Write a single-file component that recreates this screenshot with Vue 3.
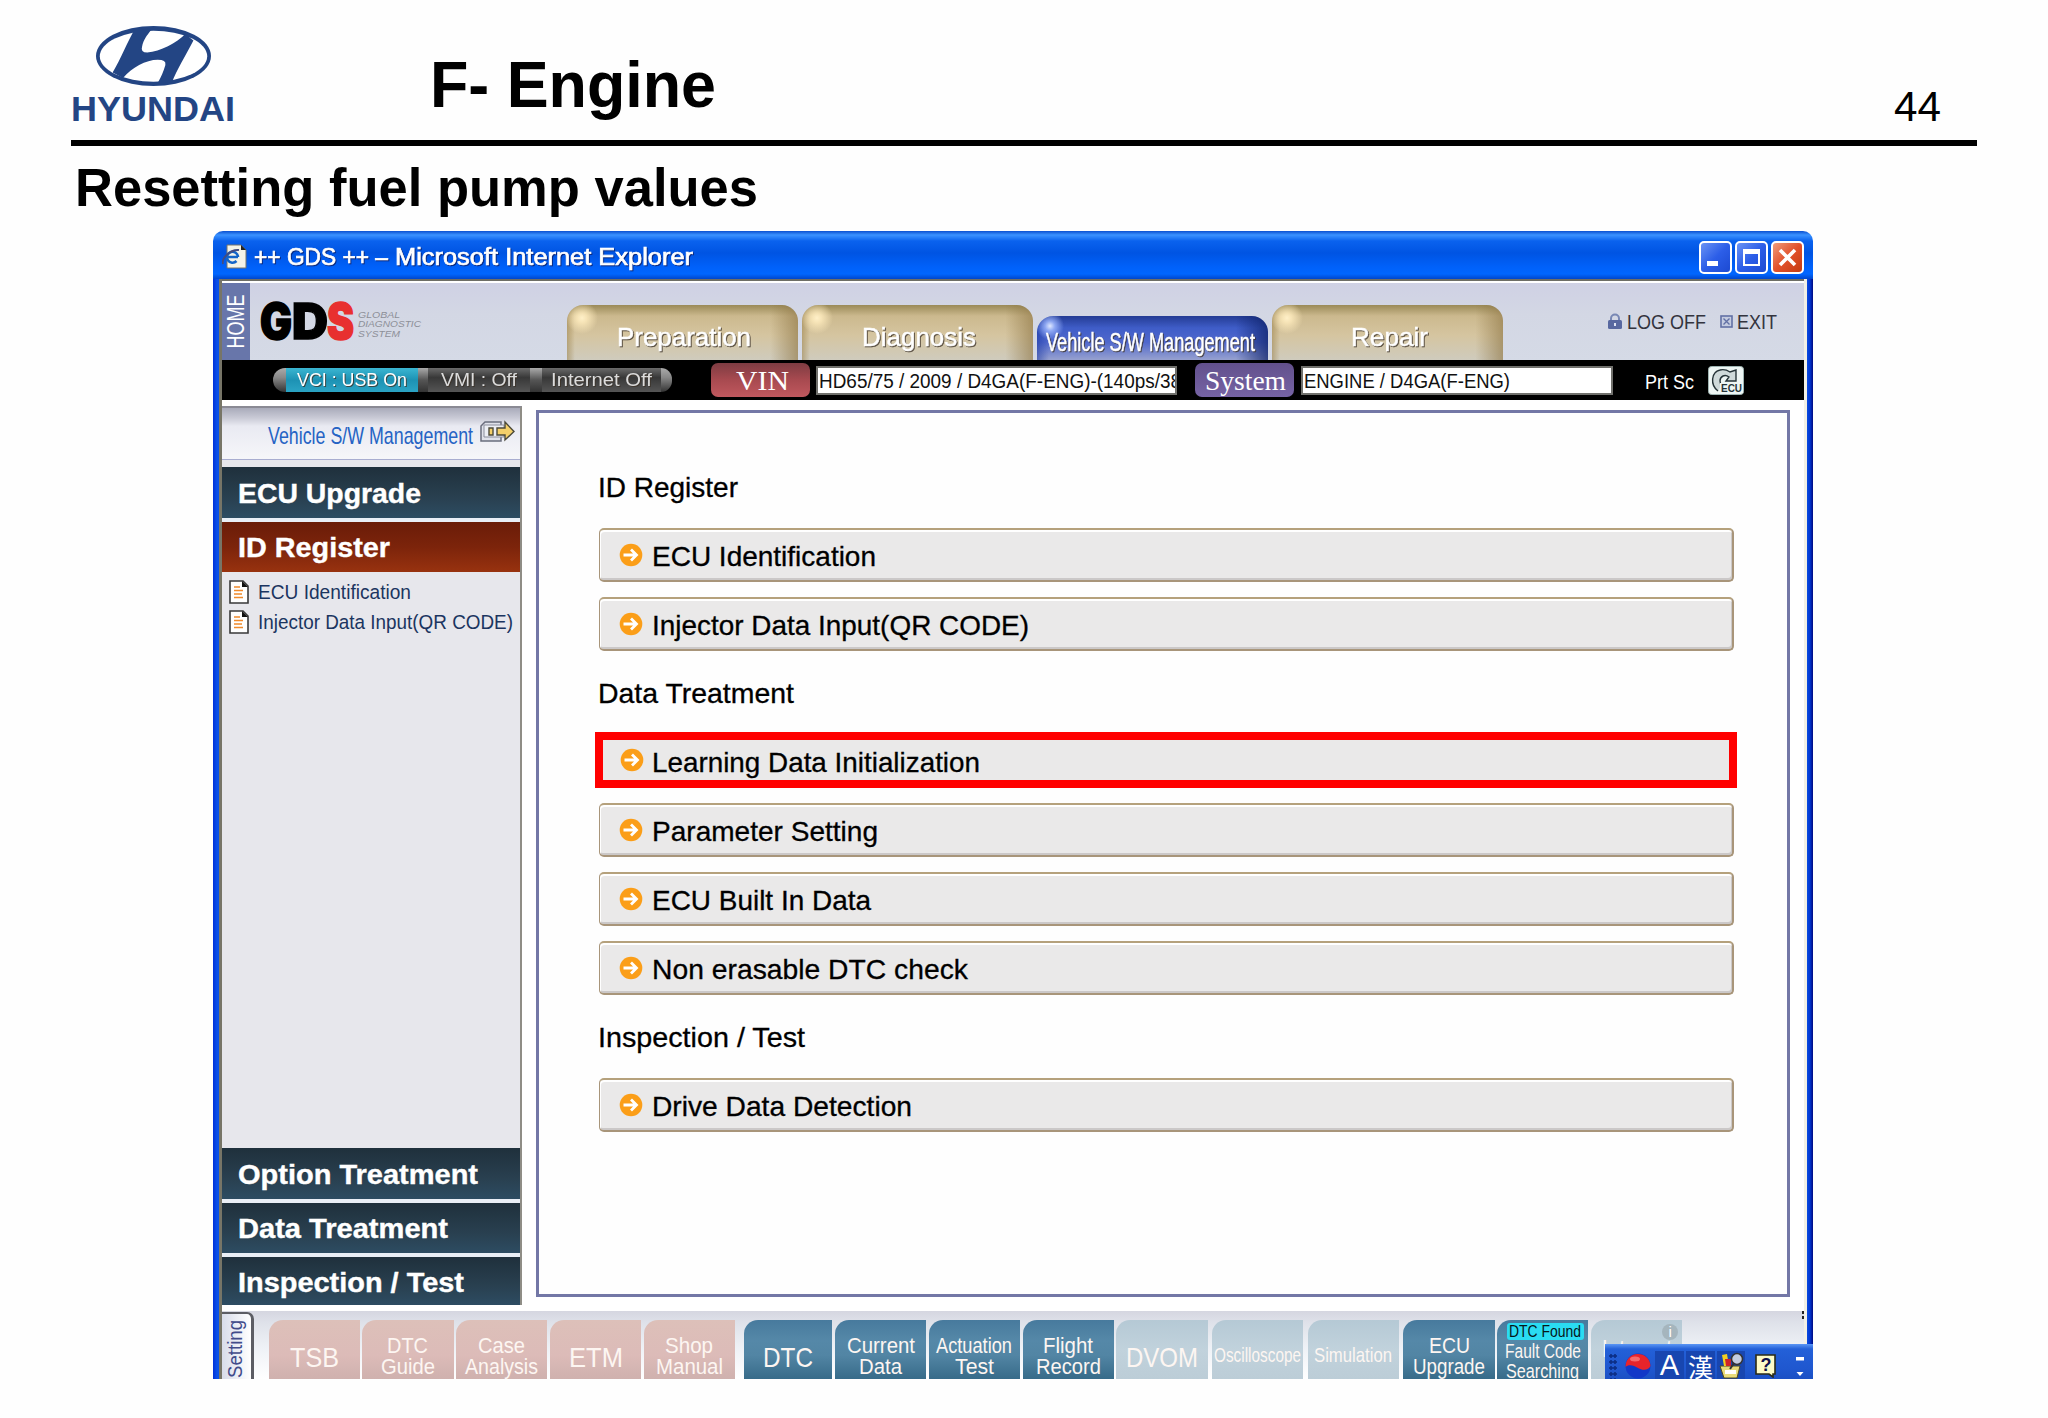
<template>
  <div class="slide">
    <header class="slide-head">
      <div class="brand">
        <svg class="emblem" viewBox="120 79 242 179" preserveAspectRatio="none">
          <ellipse cx="241" cy="168.500" rx="121" ry="89.500" fill="#234584" />
          <ellipse cx="241" cy="169" rx="113" ry="76" fill="#fff" />
          <path
            d="M203,86 C186,125 173,176 155,218 L177,234 C195,204 225,180 250,180 Q268,180 266,195 C262,215 257,230 250,248 L280,246 C290,210 309,166 325,122 L308,103 C290,130 255,155 228,158 Q213,158 217,140 C220,120 227,107 236,91 Z"
            fill="#234584"
          />
        </svg>
        <FitText class="wordmark" text="HYUNDAI" :w="164" :size="35" />
      </div>
      <FitText class="slide-title" text="F- Engine" :w="286" :size="64" />
      <FitText class="page-no" text="44" :w="47" :size="42" />
    </header>
    <FitText class="subtitle" text="Resetting fuel pump values" :w="683" :size="53.3" />

    <div class="window">
      <div class="titlebar">
        <svg class="ie-icon" viewBox="0 0 25 25">
          <path d="M5 1H19L24 6V24H5Z" fill="#f4f3e8" stroke="#77756a" />
          <path d="M19 1V6H24" fill="#222" />
          <path d="M16 13A5.500 5.500 0 1 0 14.500 17M6 13H16" fill="none" stroke="#1465c8" stroke-width="2.600" />
          <path d="M1 20C-1 15 8 5 17 6" fill="none" stroke="#444c80" stroke-width="2" />
        </svg>
        <FitText text="++ GDS ++ –" :w="134" :size="23" />
        <FitText class="title-name" text="Microsoft Internet Explorer" :w="298" :size="23" />
        <div class="win-btns">
          <svg v-for="b in ['min', 'max', 'close']" :key="b" viewBox="0 0 33 33">
            <defs>
              <linearGradient :id="'wb-' + b" x1="0" y1="0" x2="1" y2="1">
                <stop offset="0" :stop-color="b === 'close' ? '#f0a080' : '#6f97f5'" />
                <stop offset="0.500" :stop-color="b === 'close' ? '#e2512b' : '#2c5ee8'" />
                <stop offset="1" :stop-color="b === 'close' ? '#c23a10' : '#1b48d0'" />
              </linearGradient>
            </defs>
            <rect x="1" y="1" width="31" height="31" rx="4" :fill="`url(#wb-${b})`" stroke="#fff" stroke-width="2" />
            <rect v-if="b === 'min'" x="8" y="20" width="11" height="5" fill="#fff" />
            <path v-else-if="b === 'max'" d="M8 8H25V25H8ZM10 13V23H23V13Z" fill="#fff" fill-rule="evenodd" />
            <path v-else d="M9 9L24 24M24 9L9 24" stroke="#fff" stroke-width="3.600" />
          </svg>
        </div>
      </div>

      <div class="frame">
        <div class="client">
          <div class="top">
            <div class="home">
              <svg width="28" height="77"><text transform="translate(22 65.500) rotate(-90)" textLength="54" lengthAdjust="spacingAndGlyphs">HOME</text></svg>
            </div>
            <svg class="gds" width="94" height="46">
              <text x="0" y="41" textLength="32" lengthAdjust="spacingAndGlyphs">G</text>
              <text x="32" y="41" textLength="36" lengthAdjust="spacingAndGlyphs">D</text>
              <text x="67" y="41" textLength="27" lengthAdjust="spacingAndGlyphs" class="red">S</text>
            </svg>
            <div class="gds-sub">
              <FitText text="GLOBAL" :w="42" :size="9.5" />
              <FitText text="DIAGNOSTIC" :w="63" :size="9.5" />
              <FitText text="SYSTEM" :w="42" :size="9.5" />
            </div>
            <nav class="tabs">
              <div v-for="t in tabs" :key="t.text" class="tab" :class="{ active: t.active }">
                <FitText :text="t.text" :w="t.w" :size="25" />
              </div>
            </nav>
            <div class="session">
              <svg width="16" height="17" viewBox="0 0 16 17">
                <path d="M4 8V5.500A4 4 0 0 1 12 5.500V8" fill="none" stroke="#7887b4" stroke-width="2" />
                <rect x="1" y="7" width="14" height="9" rx="1.500" fill="#5868a0" />
                <rect x="7" y="10" width="2" height="3" fill="#dfe3f2" />
              </svg>
              <FitText text="LOG OFF" :w="79" :size="20" />
              <svg class="exit-icon" width="13" height="13" viewBox="0 0 13 13">
                <rect x="1" y="1" width="11" height="11" fill="#c5cce0" stroke="#6271a5" stroke-width="1.600" />
                <path d="M3.500 3.500L9.500 9.500M9.500 3.500L3.500 9.500" stroke="#6271a5" stroke-width="1.400" />
              </svg>
              <FitText text="EXIT" :w="40" :size="20" />
            </div>
          </div>

          <div class="status">
            <div class="pills">
              <i class="cap left"></i>
              <span class="pill on"><FitText text="VCI : USB On" :w="110" :size="18" /></span>
              <i class="joint"></i>
              <span class="pill vmi"><FitText text="VMI : Off" :w="76" :size="18" /></span>
              <i class="joint wide"></i>
              <span class="pill net"><FitText text="Internet Off" :w="101" :size="18" /></span>
              <i class="cap right"></i>
            </div>
            <div class="badge vin"><FitText text="VIN" :w="53" :size="27" /></div>
            <div class="field f1"><FitText text="HD65/75 / 2009 / D4GA(F-ENG)-(140ps/38" :w="362" :size="20" /></div>
            <div class="badge sys"><FitText text="System" :w="81" :size="27" /></div>
            <div class="field f2"><FitText text="ENGINE / D4GA(F-ENG)" :w="206" :size="20" /></div>
            <FitText class="prt" text="Prt Sc" :w="49" :size="20" />
            <svg class="ecu-icon" width="36" height="29" viewBox="0 0 36 29">
              <rect x="0.500" y="0.500" width="35" height="28" rx="3" fill="#eef6f4" stroke="#9fb4b2" />
              <path d="M10 25C2 19 3 6 12 4C16 3 19 4 22 6L28 4V15H18L21 11C17 8 12 10 12 15L13 20" fill="#cfdada" stroke="#253337" stroke-width="1.400" />
              <rect x="12" y="17" width="23" height="10" fill="#eef6f4" />
              <text x="13" y="26" textLength="21" lengthAdjust="spacingAndGlyphs">ECU</text>
            </svg>
          </div>

          <div class="main">
            <aside class="side">
              <div class="side-head">
                <FitText text="Vehicle S/W Management" :w="205" :size="24" />
                <svg width="35" height="23" viewBox="0 0 35 23">
                  <path d="M1 6L5 2H21V21H1Z" fill="#dfe1ea" stroke="#6a6d7d" stroke-width="1.500" />
                  <path d="M4 5H24V17H4Z" fill="#eceef4" stroke="#8a8d9c" />
                  <path d="M9 8H13V15H9ZM17 8H25V2L34 11.500L25 20V15H17Z" fill="#f4d06a" stroke="#4c4a3a" stroke-width="1.400" />
                </svg>
              </div>
              <div class="side-item first"><FitText text="ECU Upgrade" :w="183" :size="28.5" /></div>
              <div class="side-item current"><FitText text="ID Register" :w="152" :size="28.5" /></div>
              <div class="side-sub">
                <div v-for="s in subItems" :key="s.text" class="sub-row">
                  <svg width="20" height="24" viewBox="0 0 20 24">
                    <path d="M1 1H14L19 6V23H1Z" fill="#fff" stroke="#3a3a3a" stroke-width="1.600" />
                    <path d="M13 1V7H19Z" fill="#111" />
                    <path d="M5 7H11M5 10.500H14M5 14H13M5 17.500H14" stroke="#f08a2c" stroke-width="1.500" />
                  </svg>
                  <FitText :text="s.text" :w="s.w" :size="20.5" />
                </div>
              </div>
              <div class="side-item"><FitText text="Option Treatment" :w="240" :size="28.5" /></div>
              <div class="side-item"><FitText text="Data Treatment" :w="210" :size="28.5" /></div>
              <div class="side-item last"><FitText text="Inspection / Test" :w="226" :size="28.5" /></div>
            </aside>

            <section class="panel">
              <template v-for="r in rows" :key="r.text + r.kind">
                <div v-if="r.kind === 'head'" class="row head">
                  <FitText :text="r.text" :w="r.w" :size="28" />
                </div>
                <div v-else class="row">
                  <div class="btn" :class="{ marked: r.marked }">
                    <svg width="24" height="24" viewBox="0 0 24 24">
                      <circle cx="12" cy="12" r="11.300" fill="#fb9e18" />
                      <path d="M4.500 12H17M12 6.500L17.500 12L12 17.500" fill="none" stroke="#fff" stroke-width="2.800" />
                    </svg>
                    <FitText :text="r.text" :w="r.w" :size="28" />
                  </div>
                </div>
              </template>
            </section>
          </div>

          <footer class="toolbar">
            <div class="setting">
              <svg width="29" height="65"><text transform="translate(20 64) rotate(-90)" textLength="58" lengthAdjust="spacingAndGlyphs">Setting</text></svg>
            </div>
            <div v-for="(t, i) in tools" :key="i" class="tool" :class="[t.tone, t.cls, { two: t.lines.length > 1 }]">
              <span v-if="t.flag" class="flag"><FitText :text="t.flag" :w="72" :size="16" /></span>
              <FitText v-for="l in t.lines" :key="l[0]" :text="l[0]" :w="l[1]" :size="t.size" />
              <span v-if="t.info" class="info">i</span>
            </div>
          </footer>
        </div>
      </div>

      <!-- input-method bar floating over the window corner -->
      <div class="ime">
        <i class="grip"></i>
        <svg width="26" height="26" viewBox="0 0 26 26">
          <circle cx="13" cy="13" r="12.500" fill="#1238c8" />
          <path d="M0.500 14A12.500 12.500 0 0 1 25.500 13C24 17 18 18 13 15C9 12 3 11 0.500 14Z" fill="#e8242b" />
          <ellipse cx="10" cy="6" rx="5" ry="2.500" fill="#ff9a96" opacity="0.600" />
        </svg>
        <span class="ime-key latin">A</span>
        <span class="ime-key han">漢</span>
        <span class="ime-key pad">
          <svg width="26" height="28" viewBox="0 0 26 28">
            <path d="M2 14H22L19 26H6Z" fill="#e8dc7a" stroke="#4d4820" />
            <path d="M6 14L4 3L9 2L11 14Z" fill="#f2d020" />
            <path d="M8 14L7 7H13V14Z" fill="#d0242a" />
            <circle cx="19" cy="7" r="5.500" fill="#c3ccdf" stroke="#333" stroke-width="1.500" />
            <path d="M16 11L12 17" stroke="#333" stroke-width="2" />
            <path d="M7 20H18" stroke="#fff" stroke-width="4" />
          </svg>
        </span>
        <svg class="help" width="23" height="24" viewBox="0 0 23 24">
          <path d="M1 1H20V20H18V23L14 20H1Z" fill="#fdfbc8" stroke="#2b2b16" stroke-width="1.600" />
          <text x="5.500" y="17">?</text>
        </svg>
        <svg class="more" width="10" height="24" viewBox="0 0 10 24">
          <rect x="1" y="3" width="8" height="3.500" fill="#fff" />
          <path d="M1.500 18H8.500L5 22Z" fill="#fff" />
        </svg>
      </div>
    </div>
  </div>
</template>

<script setup>
import { h } from 'vue'

// Single line of text stretched or condensed to a given width
const FitText = (props) =>
  h('svg', { width: props.w, height: props.size * 1.2, class: 'fit', overflow: 'visible' }, [
    h(
      'text',
      {
        x: 0,
        y: props.size * 0.95,
        'font-size': props.size,
        fill: 'currentColor',
        textLength: props.w,
        lengthAdjust: 'spacingAndGlyphs'
      },
      props.text
    )
  ])
FitText.props = ['text', 'w', 'size']

const tabs = [
  { text: 'Preparation', w: 134 },
  { text: 'Diagnosis', w: 114 },
  { text: 'Vehicle S/W Management', w: 209, active: true },
  { text: 'Repair', w: 77 }
]

const subItems = [
  { text: 'ECU Identification', w: 153 },
  { text: 'Injector Data Input(QR CODE)', w: 255 }
]

const rows = [
  { kind: 'head', text: 'ID Register', w: 140 },
  { kind: 'btn', text: 'ECU Identification', w: 224 },
  { kind: 'btn', text: 'Injector Data Input(QR CODE)', w: 377 },
  { kind: 'head', text: 'Data Treatment', w: 196 },
  { kind: 'btn', text: 'Learning Data Initialization', w: 328, marked: true },
  { kind: 'btn', text: 'Parameter Setting', w: 226 },
  { kind: 'btn', text: 'ECU Built In Data', w: 219 },
  { kind: 'btn', text: 'Non erasable DTC check', w: 316 },
  { kind: 'head', text: 'Inspection / Test', w: 207 },
  { kind: 'btn', text: 'Drive Data Detection', w: 260 }
]

const tools = [
  { tone: 'pink', size: 28, lines: [['TSB', 49]] },
  { tone: 'pink', size: 22, lines: [['DTC', 41], ['Guide', 54]] },
  { tone: 'pink', size: 22, lines: [['Case', 47], ['Analysis', 73]] },
  { tone: 'pink', size: 28, lines: [['ETM', 54]] },
  { tone: 'pink', size: 22, lines: [['Shop', 48], ['Manual', 67]] },
  { tone: 'blue', cls: 'group', size: 28, lines: [['DTC', 50]] },
  { tone: 'blue', size: 22, lines: [['Current', 68], ['Data', 43]] },
  { tone: 'blue', size: 22, lines: [['Actuation', 76], ['Test', 39]] },
  { tone: 'blue', size: 22, lines: [['Flight', 50], ['Record', 65]] },
  { tone: 'pale', size: 28, lines: [['DVOM', 72]] },
  { tone: 'pale', cls: 'mid', size: 21, lines: [['Oscilloscope', 87]] },
  { tone: 'pale', cls: 'mid', size: 21, lines: [['Simulation', 78]] },
  { tone: 'blue', cls: 'gap', size: 22, lines: [['ECU', 41], ['Upgrade', 72]] },
  { tone: 'blue', cls: 'flagged', size: 20.5, flag: 'DTC Found', lines: [['Fault Code', 76], ['Searching', 73]] },
  { tone: 'pale', cls: 'net-tool', size: 24, info: true, lines: [['Internet', 70]] }
]
</script>

<style>
body {
  background: #fefefe;
}
</style>

<style scoped>
.slide {
  width: 2048px;
  height: 1418px;
  overflow: hidden;
  font-family: "Liberation Sans", Arial, sans-serif;
  color: #000;
  display: flex;
  flex-direction: column;
}

svg {
  display: block;
  flex: none;
}

.slide-head {
  box-sizing: border-box;
  height: 146px;
  margin: 0 71px;
  border-bottom: 6px solid #000;
  display: flex;
}

.brand {
  width: 359px;
  padding-top: 26px;
}

.emblem {
  width: 115px;
  height: 60px;
  margin-left: 25px;
}

.wordmark {
  margin-top: 2px;
  color: #234584;
  font-weight: bold;
}

.slide-title {
  margin-top: 46px;
  font-weight: bold;
}

.page-no {
  margin: 81px 36px 0 auto;
}

.subtitle {
  margin: 9px 0 0 75px;
  height: 76px;
  font-weight: bold;
}

.window {
  position: relative;
  width: 1600px;
  height: 1148px;
  margin-left: 213px;
}

.titlebar {
  box-sizing: border-box;
  height: 48px;
  padding: 2px 9px 0;
  display: flex;
  align-items: center;
  color: #fff;
  border-radius: 10px 10px 0 0;
  background: linear-gradient(#0a50d0 0, #3a92ff 4px, #0a62ee 10px, #0054e3 22px, #0061fa 36px, #0066ff 43px, #0046cc 48px);
}

.titlebar .fit {
  margin-top: 2px;
  filter: drop-shadow(1.5px 1.5px 0 #0a2a80);
  stroke: #fff;
  stroke-width: 0.7px;
}

.ie-icon {
  width: 25px;
  height: 25px;
  margin-right: 7px;
}

.title-name {
  margin-left: 7px;
}

.win-btns {
  margin: 2px 0 0 auto;
  display: flex;
  gap: 3px;
}

.win-btns svg {
  width: 33px;
  height: 33px;
}

.frame {
  height: 1100px;
  padding: 0 9px;
  background:
    linear-gradient(90deg, #0030d8, #0a50e8 4px, #0a50e8 6px, #777567 6px, #777567 9px) left / 9px 100% no-repeat,
    linear-gradient(90deg, #f2f0e6 3px, #0a4be0 3px, #0035d0 6px, #000a80 9px) right / 9px 100% no-repeat;
}

.client {
  box-sizing: border-box;
  height: 100%;
  border-top: 2px solid #6e6e66;
  background: #fff;
}

.top {
  box-sizing: border-box;
  height: 79px;
  border-top: 2px solid #fff;
  display: flex;
  background: linear-gradient(#cfd1e4, #d3d7e4 40%, #d5dae6);
}

.home {
  width: 28px;
  background: #6876aa;
}

.home text {
  font-size: 24px;
  fill: #fff;
}

.gds {
  margin: 15px 0 0 10px;
  font-family: Inter, "Liberation Sans", sans-serif;
  font-size: 49px;
  font-weight: 900;
  stroke: #000;
  stroke-width: 1.5px;
}

.gds .red {
  fill: #e8302f;
  stroke: #e8302f;
}

.gds-sub {
  margin: 26px 0 0 4px;
  width: 209px;
  display: flex;
  flex-direction: column;
  font-style: italic;
  color: #8d8f98;
}

.gds-sub .fit {
  height: 9.4px;
}

.tabs {
  display: flex;
  align-items: flex-end;
  gap: 4.3px;
}

.tab {
  box-sizing: border-box;
  width: 230.800px;
  height: 55px;
  padding: 16.5px 0 0 3px;
  display: flex;
  justify-content: center;
  border-radius: 16px 16px 0 0;
  color: #fff;
  background:
    radial-gradient(circle at 15px 13px, #fff0c8 0, rgba(255, 236, 190, 0.8) 5px, transparent 16px),
    linear-gradient(90deg, rgba(150, 125, 70, 0.5), transparent 8px, transparent 88%, rgba(140, 115, 65, 0.6)),
    linear-gradient(#9a8a58, #ccb98e 11px, #d5c5a0 55%, #cfcbbd);
}

.tab .fit,
.pill .fit {
  filter: drop-shadow(1.5px 1.5px 0.5px rgba(60, 50, 40, 0.8));
}

.tab .fit {
  stroke: #fff;
  stroke-width: 0.5px;
}

.tab.active {
  height: 44px;
  padding: 10.5px 4px 0 0;
  background:
    radial-gradient(circle at 13px 10px, #dfe8ff 0, rgba(160, 185, 255, 0.8) 5px, transparent 14px),
    linear-gradient(90deg, rgba(20, 50, 160, 0.5), transparent 12px, transparent 86%, rgba(10, 30, 100, 0.7)),
    linear-gradient(#243c94, #3f5dc8 12px, #5068cc 60%, #97a1cf);
}

.session {
  margin-left: 104px;
  height: 77px;
  display: flex;
  align-items: center;
  color: #33343e;
}

.session .fit {
  margin-left: 4px;
}

.exit-icon {
  margin-left: 14px;
}

.status {
  height: 40px;
  display: flex;
  align-items: center;
  background: #000;
  color: #fff;
}

.pills {
  margin-left: 51px;
  width: 399px;
  height: 24px;
  display: flex;
}

.pill {
  display: flex;
  justify-content: center;
  align-items: center;
  color: #dcdcdc;
  background: linear-gradient(#6a6a6a, #383838 40%, #555);
}

.pill.on {
  width: 132px;
  color: #fff;
  background: linear-gradient(#3bb6d2, #1d92b4 50%, #2ba4c4);
}

.pill.vmi {
  width: 102px;
}

.pill.net {
  width: 119px;
}

.joint {
  width: 10px;
  background: linear-gradient(#aaa, #555 50%, #333);
}

.joint.wide {
  width: 12px;
}

.cap {
  width: 13px;
  background: linear-gradient(#aaa, #888 40%, #333);
}

.cap.left {
  border-radius: 12px 0 0 12px;
}

.cap.right {
  width: 11px;
  border-radius: 0 12px 12px 0;
}

.badge {
  box-sizing: border-box;
  width: 99px;
  height: 34px;
  border-radius: 7px;
  display: flex;
  align-items: center;
  font-family: "Liberation Serif", "Times New Roman", serif;
}

.vin {
  margin-left: 39px;
  padding-left: 25px;
  background: linear-gradient(#7e3c42, #a84a50 50%, #c0585e);
}

.sys {
  margin-left: 18px;
  padding-left: 10px;
  background: linear-gradient(#62508c, #7663a4);
}

.field {
  box-sizing: border-box;
  height: 29px;
  overflow: hidden;
  padding-left: 1px;
  border: 2px solid #70706c;
  background: #fff;
  color: #111;
  display: flex;
  align-items: center;
}

.field .fit {
  margin-top: 1px;
}

.f1 {
  width: 361px;
  margin-left: 6px;
}

.f2 {
  width: 312px;
  margin-left: 7px;
}

.prt {
  margin: 4px 0 0 32px;
}

.ecu-icon {
  margin-left: 14px;
}

.ecu-icon text {
  font-size: 11px;
  font-weight: bold;
  fill: #253337;
}

.main {
  height: 911px;
  display: flex;
  align-items: flex-start;
}

.side {
  box-sizing: border-box;
  width: 300px;
  height: 899px;
  margin-top: 6px;
  border-top: 2px solid #8a8a94;
  border-right: 2px solid #8f8d86;
  background: #e7e7ec;
  display: flex;
  flex-direction: column;
}

.side-head {
  box-sizing: border-box;
  height: 52px;
  padding: 4px 5px 0 46px;
  border-bottom: 1.5px solid #a9add0;
  display: flex;
  align-items: center;
  justify-content: space-between;
  color: #2563c4;
  background: linear-gradient(#a9abba, #c9cad6 10px, #e9eaf2 18px, #f6f6f9);
}

.side-head svg:last-child {
  margin-bottom: 9px;
}

.side-item {
  box-sizing: border-box;
  height: 54.5px;
  padding: 1px 0 0 15.5px;
  border-bottom: 4.5px solid #e9eef6;
  display: flex;
  align-items: center;
  font-weight: bold;
  color: #fff;
  stroke: #fff;
  stroke-width: 0.4px;
  background: linear-gradient(#1f303c, #294050 60%, #2d4c62);
}

.side-item.first {
  margin-top: 7px;
}

.side-item.current {
  height: 50px;
  padding-top: 2px;
  border-bottom: none;
  background: linear-gradient(#6a1c08, #7c240b 50%, #98320f);
}

.side-item.last {
  height: 48px;
  padding-top: 3px;
  border-bottom: none;
}

.side-sub {
  flex: 1;
  padding: 6px 0 0 7px;
  color: #1b3560;
}

.sub-row {
  height: 29.8px;
  display: flex;
  align-items: center;
  gap: 9px;
}

.panel {
  box-sizing: border-box;
  width: 1254px;
  height: 887px;
  margin: 10px 0 0 14px;
  padding: 46px 53px 0 59.5px;
  border: 3px solid #7377a6;
  background: #fefefe;
}

.row {
  height: 68.8px;
  display: flex;
  align-items: flex-start;
}

.row.head {
  padding-top: 11px;
  box-sizing: border-box;
}

.head .fit {
  margin-left: -1px;
}

.btn {
  box-sizing: border-box;
  width: 1135px;
  height: 54px;
  padding-left: 19.500px;
  border: 2px solid #a8957a;
  border-top-color: #b5a17c;
  border-left-width: 1.5px;
  border-radius: 5px;
  box-shadow: inset 1px 2px 0 #fff, inset -1px -2px 0 #cbc8c8;
  background: #eae9e9;
  display: flex;
  align-items: center;
  gap: 8.500px;
}

.btn .fit {
  margin-top: 2px;
}

.btn.marked {
  outline: 8px solid #f00;
  outline-offset: -3px;
  box-shadow: none;
  width: 1132px;
  height: 46px;
  border: none;
  padding-left: 20px;
  border-radius: 0;
  margin: 3px 0 0 1px;
}

.marked .fit {
  margin-top: 4px;
}

.panel .fit {
  stroke: #000;
  stroke-width: 0.3px;
}

.toolbar {
  position: relative;
  height: 67.5px;
  display: flex;
  align-items: flex-end;
  overflow: hidden;
  background: linear-gradient(#d5d6e0, #dfe2ea 12px, #eef1f6 36px, #fff);
}

.toolbar::after {
  content: "";
  position: absolute;
  top: 0;
  right: 0;
  width: 2px;
  height: 8px;
  background: linear-gradient(#222 3px, transparent 3px, transparent 5px, #222 5px);
}

.setting {
  box-sizing: border-box;
  width: 32px;
  height: 67px;
  margin-right: 12px;
  border: 2px solid #5c5d64;
  border-width: 2px 3px 0 0;
  border-radius: 0 7px 0 0;
  background: linear-gradient(90deg, #d8dcea, #fff);
}

.setting text {
  font-size: 21px;
  fill: #414b8a;
}

.tool {
  position: relative;
  box-sizing: border-box;
  width: 91.2px;
  height: 59px;
  margin-left: 2.6px;
  padding-top: 20px;
  display: flex;
  flex-direction: column;
  align-items: center;
  overflow: hidden;
  border-radius: 14px 0 0 0;
  color: #fdf6f2;
}

.tool .fit {
  height: 20.5px;
}

.tool.two {
  padding-top: 12.5px;
}

.pink {
  background: linear-gradient(#ddc0b9, #dcbbb8 60%, #cfb1ae);
}

.blue {
  background: linear-gradient(#477a9d, #5588a8 35%, #5285a4 60%, #376b89);
}

.pale {
  background: linear-gradient(#b5c9d5, #c1d2dc 50%, #bccdd7);
}

.tool.group {
  width: 88.500px;
  margin-left: 9px;
}

.tool.mid {
  margin-left: 4.500px;
  padding-top: 22.500px;
}

.tool.gap {
  margin-left: 4.5px;
}

.tool.flagged {
  padding-top: 3.5px;
}

.flagged .fit {
  height: 20px;
}

.flag {
  flex: none;
  width: 77px;
  height: 17px;
  margin: 0 0 -1px 5px;
  border-radius: 3px;
  display: flex;
  justify-content: center;
  background: #2adcf2;
  color: #06161a;
}

.flag .fit {
  margin-top: -1px;
}

.tool.net-tool {
  padding-top: 14px;
}

.info {
  position: absolute;
  top: 4px;
  right: 4px;
  width: 16px;
  height: 16px;
  border-radius: 50%;
  background: #a5b5bd;
  font-size: 15px;
  line-height: 16px;
  text-align: center;
  color: #fff;
}

.ime {
  position: absolute;
  right: 0;
  bottom: 0;
  box-sizing: border-box;
  width: 208px;
  height: 35px;
  padding: 8px 8px 0 4px;
  display: flex;
  align-items: center;
  overflow: hidden;
  color: #fff;
  background: linear-gradient(#5a96f5, #2360d8 5px, #1f57cf 25px, #1b50c4);
}

.grip {
  width: 8px;
  height: 26px;
  margin-right: 8px;
  background: radial-gradient(circle, #0c2f88 1.5px, transparent 2px) 0 0 / 4px 6px;
}

.ime-key {
  height: 30px;
  display: flex;
  align-items: center;
  justify-content: center;
  background: #1846b0;
  margin-left: 2px;
}

.latin {
  width: 29px;
  margin-left: 4px;
  font-size: 29px;
}

.han {
  width: 29px;
  font-family: "Noto Sans CJK KR", sans-serif;
  font-size: 25px;
  line-height: 28px;
}

.pad {
  width: 28px;
}

.help {
  margin-left: 10px;
}

.help text {
  font-size: 18px;
  font-weight: bold;
  fill: #10104a;
}

.more {
  margin-left: auto;
}
</style>
